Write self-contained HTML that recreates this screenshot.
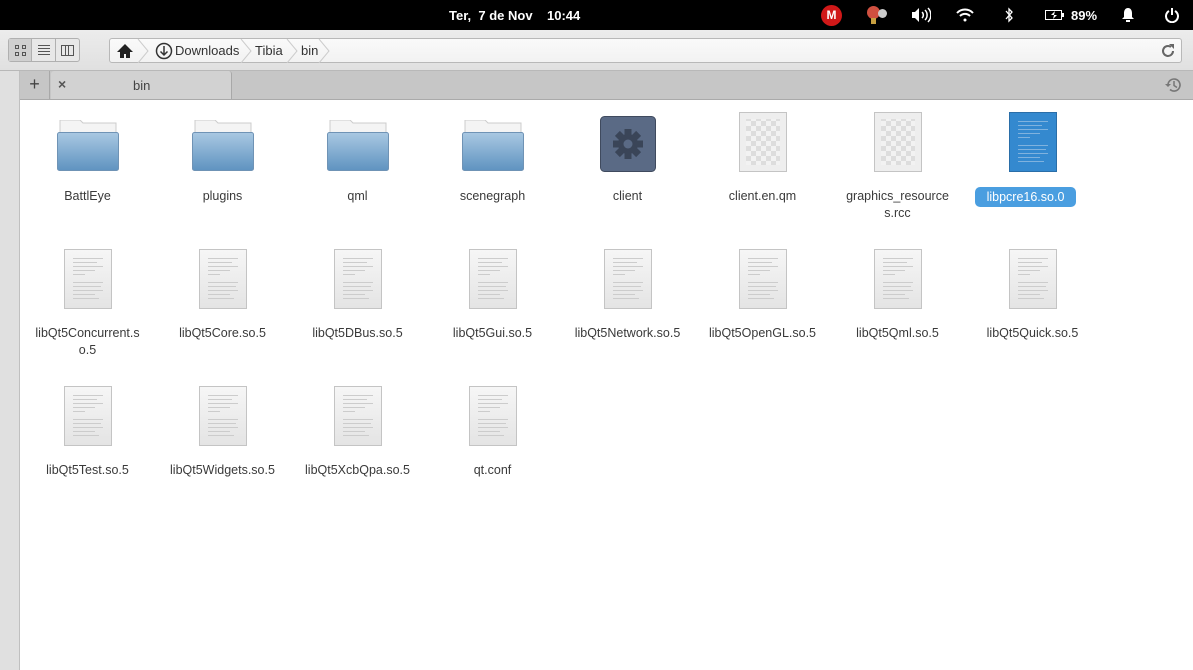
<!DOCTYPE html>
<html><head><meta charset="utf-8"><style>
*{margin:0;padding:0;box-sizing:border-box}
body{width:1193px;height:670px;overflow:hidden;background:#fff;font-family:"Liberation Sans",sans-serif;position:relative}
.top{position:absolute;left:0;top:0;width:1193px;height:30px;background:#000;color:#fff;font-size:13px;font-weight:bold}
.tool{position:absolute;left:0;top:30px;width:1193px;height:41px;background:linear-gradient(#ececec,#e0e0e0);border-bottom:1px solid #b8b8b8}
.side{position:absolute;left:0;top:71px;width:20px;height:599px;background:#e0e0e0;border-right:1px solid #c0c0c0}
.tabs{position:absolute;left:20px;top:71px;width:1173px;height:29px;background:#c6c6c6;border-bottom:1px solid #aaa}
.content{position:absolute;left:20px;top:100px;width:1173px;height:570px;background:#fff}
.item{position:absolute;width:135px;text-align:center;font-size:12.5px;color:#3a3a3a;line-height:17px}
.item .lbl{position:absolute;top:76px;left:0;width:135px;padding:0 4px}
.folder{position:absolute;left:37px;top:8px;width:62px;height:51px}
.doc{position:absolute;left:44px;top:0;width:48px;height:60px;background:linear-gradient(#f6f6f6,#e4e4e4);border:1px solid #c4c4c4}
.doc i{position:absolute;left:8px;height:1px;background:#ccc}
.blue i{background:#7fb2de}
</style></head><body>
<div class="top">
<div style="position:absolute;left:449px;top:8px">Ter,&nbsp; 7 de Nov&nbsp;&nbsp;&nbsp; 10:44</div>
<div style="position:absolute;left:821px;top:5px;width:21px;height:21px;border-radius:50%;background:#d01818;font-size:12px;text-align:center;line-height:21px">M</div>
<div style="position:absolute;left:867px;top:6px;width:13px;height:13px;border-radius:50%;background:#d05040"></div>
<div style="position:absolute;left:878px;top:9px;width:9px;height:9px;border-radius:50%;background:#ccc"></div>
<div style="position:absolute;left:871px;top:18px;width:5px;height:6px;background:#c8a040"></div>
<svg style="position:absolute;left:911px;top:7px" width="20" height="16"><path d="M1 5h3l4-4v14l-4-4H1z" fill="#fff"/><path d="M11 5a4 4 0 0 1 0 6M14 3a7 7 0 0 1 0 10M17 1a10 10 0 0 1 0 14" stroke="#fff" stroke-width="1.5" fill="none"/></svg>
<svg style="position:absolute;left:956px;top:8px" width="18" height="14" viewBox="0 0 18 14"><path d="M1 5a11 11 0 0 1 16 0M4 8a7 7 0 0 1 10 0" stroke="#fff" stroke-width="2" fill="none"/><circle cx="9" cy="12" r="1.5" fill="#fff"/></svg>
<svg style="position:absolute;left:1004px;top:7px" width="10" height="16"><path d="M2 4l6 7-3 3V2l3 3-6 7" stroke="#fff" stroke-width="1.3" fill="none"/></svg>
<div style="position:absolute;left:1045px;top:10px;width:17px;height:10px;border:1.5px solid #fff"></div>
<div style="position:absolute;left:1062px;top:13px;width:2px;height:4px;background:#fff"></div>
<svg style="position:absolute;left:1049px;top:11px" width="10" height="8"><path d="M6 0L2 4h3l-1 4 4-4H5z" fill="#fff"/></svg>
<div style="position:absolute;left:1071px;top:8px">89%</div>
<svg style="position:absolute;left:1121px;top:7px" width="14" height="16"><path d="M7 1c3 0 4 3 4 5v4l2 2H1l2-2V6c0-2 1-5 4-5z" fill="#fff"/><rect x="5" y="13" width="4" height="2" fill="#fff"/></svg>
<svg style="position:absolute;left:1165px;top:7px" width="14" height="16"><path d="M4 4a6 6 0 1 0 6 0" stroke="#fff" stroke-width="2" fill="none"/><path d="M7 1v7" stroke="#fff" stroke-width="2"/></svg>
</div>
<div class="tool">
<div style="position:absolute;left:8px;top:8px;width:72px;height:24px;border:1px solid #b0b0b0;border-radius:3px;background:#e8e8e8;display:flex">
<div style="width:24px;background:#d0d0d0;border-right:1px solid #b0b0b0;position:relative"><span style="position:absolute;left:6px;top:6px;width:4px;height:4px;border:1px solid #555"></span><span style="position:absolute;left:13px;top:6px;width:4px;height:4px;border:1px solid #555"></span><span style="position:absolute;left:6px;top:13px;width:4px;height:4px;border:1px solid #555"></span><span style="position:absolute;left:13px;top:13px;width:4px;height:4px;border:1px solid #555"></span></div>
<div style="width:24px;border-right:1px solid #b0b0b0;position:relative"><span style="position:absolute;left:6px;top:6px;width:12px;height:10px;border-top:1px solid #555;border-bottom:1px solid #555"></span><span style="position:absolute;left:6px;top:9px;width:12px;height:4px;border-top:1px solid #555;border-bottom:1px solid #555"></span></div>
<div style="width:24px;position:relative"><span style="position:absolute;left:5px;top:6px;width:13px;height:11px;border:1px solid #555"></span><span style="position:absolute;left:9px;top:6px;width:4px;height:11px;border-left:1px solid #555;border-right:1px solid #555"></span></div>
</div>
<div style="position:absolute;left:109px;top:8px;width:1073px;height:25px;border:1px solid #b8b8b8;border-radius:3px;background:linear-gradient(#fafafa,#f2f2f2);font-size:13px;color:#333">
<svg style="position:absolute;left:6px;top:4px" width="18" height="16"><path d="M9 1L1 9h3v6h4v-4h2v4h4V9h3z" fill="#222"/></svg>
<svg style="position:absolute;left:26px;top:0" width="14" height="24"><path d="M2 0l10 12-10 12" stroke="#ccc" fill="none"/></svg>
<svg style="position:absolute;left:45px;top:3px" width="18" height="18"><circle cx="9" cy="9" r="7.5" stroke="#333" stroke-width="1.5" fill="none"/><path d="M9 4v9M5.5 9.5L9 13l3.5-3.5" stroke="#333" stroke-width="1.5" fill="none"/></svg>
<span style="position:absolute;left:65px;top:4px">Downloads</span>
<svg style="position:absolute;left:129px;top:0" width="14" height="24"><path d="M2 0l10 12-10 12" stroke="#ccc" fill="none"/></svg>
<span style="position:absolute;left:145px;top:4px">Tibia</span>
<svg style="position:absolute;left:175px;top:0" width="14" height="24"><path d="M2 0l10 12-10 12" stroke="#ccc" fill="none"/></svg>
<span style="position:absolute;left:191px;top:4px">bin</span>
<svg style="position:absolute;left:207px;top:0" width="14" height="24"><path d="M2 0l10 12-10 12" stroke="#ccc" fill="none"/></svg>
<svg style="position:absolute;left:1050px;top:4px" width="16" height="16"><path d="M13 8a5 5 0 1 1-2-4" stroke="#666" stroke-width="2" fill="none"/><path d="M9 1h5v5z" fill="#666"/></svg>
</div>
</div>
<div class="side"></div>
<div class="tabs">
<div style="position:absolute;left:0;top:0;width:30px;height:28px;border-right:1px solid #a8a8a8;font-size:18px;text-align:center;line-height:27px;color:#444">+</div>
<div style="position:absolute;left:31px;top:0;width:181px;height:28px;background:#d2d2d2;border-right:1px solid #a8a8a8;border-radius:3px 3px 0 0">
<span style="position:absolute;left:7px;top:5px;font-size:14px;color:#555;font-weight:bold">×</span>
<span style="position:absolute;left:82px;top:7px;font-size:13px;color:#444">bin</span></div>
<svg style="position:absolute;left:1144px;top:5px" width="18" height="18"><path d="M4 9a6 6 0 1 1 2 4.5" stroke="#777" stroke-width="1.6" fill="none"/><path d="M1 8l3 3 3-3z" fill="#777"/><path d="M10 5v4.5l3 2" stroke="#777" stroke-width="1.5" fill="none"/></svg>
</div>
<div class="content">
<div class="item" style="left:0;top:12px"><svg class="folder" viewBox="0 0 62 51"><path d="M3 0h20l3 3h33v10H3z" fill="#f4f4f4" stroke="#ccc"/><rect x="0.5" y="12.5" width="61" height="38" rx="2" fill="url(#fg)" stroke="#6f93b5"/></svg><div class="lbl">BattlEye</div></div>
<div class="item" style="left:135px;top:12px"><svg class="folder" viewBox="0 0 62 51"><path d="M3 0h20l3 3h33v10H3z" fill="#f4f4f4" stroke="#ccc"/><rect x="0.5" y="12.5" width="61" height="38" rx="2" fill="url(#fg)" stroke="#6f93b5"/></svg><div class="lbl">plugins</div></div>
<div class="item" style="left:270px;top:12px"><svg class="folder" viewBox="0 0 62 51"><path d="M3 0h20l3 3h33v10H3z" fill="#f4f4f4" stroke="#ccc"/><rect x="0.5" y="12.5" width="61" height="38" rx="2" fill="url(#fg)" stroke="#6f93b5"/></svg><div class="lbl">qml</div></div>
<div class="item" style="left:405px;top:12px"><svg class="folder" viewBox="0 0 62 51"><defs><linearGradient id="fg" x1="0" y1="0" x2="0" y2="1"><stop offset="0" stop-color="#a9c8e2"/><stop offset="1" stop-color="#5f93c0"/></linearGradient></defs><path d="M3 0h20l3 3h33v10H3z" fill="#f4f4f4" stroke="#ccc"/><rect x="0.5" y="12.5" width="61" height="38" rx="2" fill="url(#fg)" stroke="#6f93b5"/></svg><div class="lbl">scenegraph</div></div>
<div class="item" style="left:540px;top:12px"><svg style="position:absolute;left:40px;top:4px" width="56" height="56" viewBox="0 0 56 56"><rect x="0.5" y="0.5" width="55" height="55" rx="4" fill="#5a6a85" stroke="#3f4a5e"/><g transform="translate(28 28)" fill="#3a4558"><circle r="10"/><rect x="-3.5" y="-15" width="7" height="30"/><rect x="-15" y="-3.5" width="30" height="7"/><rect x="-3.5" y="-15" width="7" height="30" transform="rotate(45)"/><rect x="-3.5" y="-15" width="7" height="30" transform="rotate(-45)"/><circle r="4.5" fill="#5a6a85"/></g></svg><div class="lbl">client</div></div>
<div class="item" style="left:675px;top:12px"><div class="doc" style="background:repeating-conic-gradient(#ddd 0 25%,#f2f2f2 0 50%) 6px 8px/10px 10px;border:1px solid #c4c4c4;box-shadow:inset 0 0 0 6px #eee"></div><div class="lbl">client.en.qm</div></div>
<div class="item" style="left:810px;top:12px"><div class="doc" style="background:repeating-conic-gradient(#ddd 0 25%,#f2f2f2 0 50%) 6px 8px/10px 10px;border:1px solid #c4c4c4;box-shadow:inset 0 0 0 6px #eee"></div><div class="lbl">graphics_resource<br>s.rcc</div></div>
<div class="item" style="left:945px;top:12px"><div class="doc blue" id="bd" style="background:#3489cf;border-color:#2a6ea8"></div><div class="lbl" style="left:10px;width:101px;padding:0;background:#4a9ee0;color:#fff;border-radius:5px;line-height:20px;top:75px">libpcre16.so.0</div></div>
</div>
<script>
const rows=[[149,["libQt5Concurrent.s<br>o.5","libQt5Core.so.5","libQt5DBus.so.5","libQt5Gui.so.5","libQt5Network.so.5","libQt5OpenGL.so.5","libQt5Qml.so.5","libQt5Quick.so.5"]],[286,["libQt5Test.so.5","libQt5Widgets.so.5","libQt5XcbQpa.so.5","qt.conf"]]];
const c=document.querySelector('.content');let lines='';
[[8,30],[12,24],[16,30],[20,22],[24,12],[32,30],[36,28],[40,30],[44,22],[48,26]].forEach(([y,w])=>lines+=`<i style="top:${y}px;width:${w}px"></i>`);
document.getElementById('bd').innerHTML=lines;
rows.forEach(([t,names])=>names.forEach((n,i)=>{c.insertAdjacentHTML('beforeend',`<div class="item" style="left:${i*135}px;top:${t}px"><div class="doc">${lines}</div><div class="lbl">${n}</div></div>`)}));
</script>
</body></html>
